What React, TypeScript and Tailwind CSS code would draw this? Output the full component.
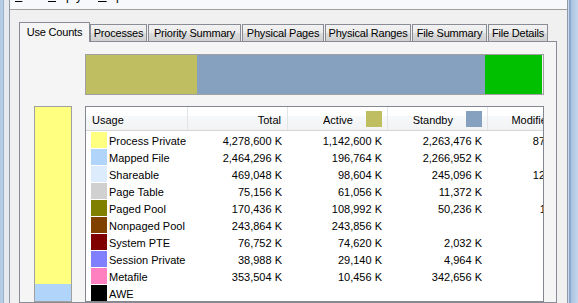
import React from "react";

const rows: { name: string; color: string; total: string; active: string; standby: string; modified: string }[] = [
  { name: "Process Private", color: "#ffff80", total: "4,278,600 K", active: "1,142,600 K", standby: "2,263,476 K", modified: "872,524 K" },
  { name: "Mapped File", color: "#b0d4fa", total: "2,464,296 K", active: "196,764 K", standby: "2,266,952 K", modified: "580 K" },
  { name: "Shareable", color: "#dcecfc", total: "469,048 K", active: "98,604 K", standby: "245,096 K", modified: "125,348 K" },
  { name: "Page Table", color: "#d0d0d0", total: "75,156 K", active: "61,056 K", standby: "11,372 K", modified: "2,728 K" },
  { name: "Paged Pool", color: "#808000", total: "170,436 K", active: "108,992 K", standby: "50,236 K", modified: "11,208 K" },
  { name: "Nonpaged Pool", color: "#804000", total: "243,864 K", active: "243,856 K", standby: "", modified: "" },
  { name: "System PTE", color: "#800000", total: "76,752 K", active: "74,620 K", standby: "2,032 K", modified: "100 K" },
  { name: "Session Private", color: "#8080ff", total: "38,988 K", active: "29,140 K", standby: "4,964 K", modified: "4,884 K" },
  { name: "Metafile", color: "#ff80c0", total: "353,504 K", active: "10,456 K", standby: "342,656 K", modified: "392 K" },
  { name: "AWE", color: "#000000", total: "", active: "", standby: "", modified: "" },
  { name: "Driver Locked", color: "#606060", total: "", active: "", standby: "", modified: "" },
];

const tabs: { label: string; w: string }[] = [
  { label: "Processes", w: "w-[57px]" },
  { label: "Priority Summary", w: "w-[93px]" },
  { label: "Physical Pages", w: "w-[82px]" },
  { label: "Physical Ranges", w: "w-[86px]" },
  { label: "File Summary", w: "w-[75px]" },
  { label: "File Details", w: "w-[60px]" },
];

export default function App() {
  return (
    <div className="w-[578px] h-[303px] overflow-hidden flex font-['Liberation_Sans',Arial,sans-serif] text-[11px] text-black leading-none">
      {/* left frame */}
      <div className="w-[9px] h-full flex shrink-0">
        <div className="w-[3px] h-full bg-[#b5cce6]" />
        <div className="w-px h-full bg-[#9fb3c8]" />
        <div className="w-[5px] h-full bg-[#e6eaef]" />
      </div>
      {/* window body */}
      <div className="w-[559px] h-full shrink-0 flex flex-col border-x border-[#8f9aa6]">
        {/* menubar (cut off at the top of the picture) */}
        <div className="h-[9px] overflow-hidden bg-[#f6f8fb] shrink-0">
          <div className="flex text-[12px] leading-[14px] -mt-[11px] pl-[5px]">
            <span className="w-[33px]"><u>F</u>ile</span>
            <span className="w-[50px]"><u>E</u>mpty</span>
            <span><u>H</u>elp</span>
          </div>
        </div>
        <div className="h-px bg-[#a0a0a0] shrink-0" />
        {/* client */}
        <div className="flex-1 bg-[#f0f0f0] pl-[9px] pr-[10px] pt-[12px] flex flex-col min-h-0">
          {/* tab strip */}
          <div className="flex items-end h-[19px] shrink-0 tracking-[-0.2px]">
            <div className="w-[71px] h-[20px] -mb-px relative z-10 bg-[#f5f5f5] border-x border-t border-[#898c95] flex items-start justify-center pt-[4px]">
              Use Counts
            </div>
            <div className="flex items-end gap-px">
              {tabs.map((t) => (
                <div
                  key={t.label}
                  className={`${t.w} h-[17px] border-x border-t border-[#898c95] bg-[linear-gradient(to_bottom,#f2f2f2_0%,#ebebeb_50%,#dddddd_50%,#cfcfcf_100%)] flex items-center justify-center pt-px`}
                >
                  {t.label}
                </div>
              ))}
            </div>
          </div>
          {/* tab page */}
          <div className="flex-1 border border-[#898c95] bg-[#f5f5f5] flex flex-col pt-[12px] min-h-0">
            {/* top bar */}
            <div className="ml-[65px] mr-[12px] h-[41px] shrink-0 border border-[#a0a0a0] flex">
              <div className="w-[111px] h-full bg-[#bfbf62]" />
              <div className="w-[288px] h-full bg-[#86a0bf]" />
              <div className="flex-1 h-full bg-[#00c000] border-r border-[#f0f0f0]" />
            </div>
            <div className="flex flex-1 mt-[11px] min-h-0">
              {/* left bar */}
              <div className="ml-[14px] w-[38px] border border-[#a0a0a0] flex flex-col shrink-0">
                <div className="h-[177px] bg-[#ffff80] shrink-0" />
                <div className="flex-1 bg-[#b0d4fa]" />
              </div>
              {/* list view */}
              <div className="ml-[13px] mr-[12px] flex-1 border border-[#828790] bg-white overflow-hidden">
                <div className="w-[700px]">
                  {/* header */}
                  <div className="flex h-[24px] border-b border-[#d5d5d5] bg-[linear-gradient(to_bottom,#ffffff_0%,#ffffff_40%,#f7f8fa_40%,#f2f3f5_100%)]">
                    <div className="w-[102px] h-full border-r border-[#e3e4e6] flex items-center pl-[6px] pt-[3px]">Usage</div>
                    <div className="w-[100px] h-full border-r border-[#e3e4e6] flex items-center justify-end pr-[6px] pt-[3px]">Total</div>
                    <div className="w-[100px] h-full border-r border-[#e3e4e6] flex items-center justify-end pr-[5px]">
                      <span className="pt-[3px]">Active</span>
                      <span className="w-[16px] h-[16px] ml-[13px] bg-[#bfbf62]" />
                    </div>
                    <div className="w-[100px] h-full border-r border-[#e3e4e6] flex items-center justify-end pr-[5px]">
                      <span className="pt-[3px]">Standby</span>
                      <span className="w-[16px] h-[16px] ml-[13px] bg-[#86a0bf]" />
                    </div>
                    <div className="w-[100px] h-full border-r border-[#e3e4e6] flex items-center justify-end pr-[5px]">
                      <span className="pt-[3px]">Modified</span>
                      <span className="w-[16px] h-[16px] ml-[13px] bg-[#00c000]" />
                    </div>
                  </div>
                  <div className="pt-px">
                    {rows.map((r) => (
                      <div key={r.name} className="flex h-[17px]">
                        <div className="w-[102px] flex items-start pl-[5px]">
                          <span className="w-[16px] h-[16px] shrink-0" style={{ backgroundColor: r.color }} />
                          <span className="ml-[2px] h-[16px] flex items-center pt-[2px] whitespace-nowrap">{r.name}</span>
                        </div>
                        <div className="w-[100px] h-[16px] flex items-center justify-end pr-[6px] pt-[2px] whitespace-nowrap">{r.total}</div>
                        <div className="w-[100px] h-[16px] flex items-center justify-end pr-[6px] pt-[2px] whitespace-nowrap">{r.active}</div>
                        <div className="w-[100px] h-[16px] flex items-center justify-end pr-[6px] pt-[2px] whitespace-nowrap">{r.standby}</div>
                        <div className="w-[100px] h-[16px] flex items-center justify-end pr-[5px] pt-[2px] whitespace-nowrap">{r.modified}</div>
                      </div>
                    ))}
                  </div>
                </div>
              </div>
            </div>
          </div>
        </div>
      </div>
      {/* right frame */}
      <div className="w-[10px] h-full flex shrink-0">
        <div className="w-px h-full bg-[#c8d8ea]" />
        <div className="w-[2px] h-full bg-[#8aa8cc]" />
        <div className="flex-1 h-full bg-[linear-gradient(to_right,#a9c3e2,#c3d6ec)]" />
      </div>
    </div>
  );
}
